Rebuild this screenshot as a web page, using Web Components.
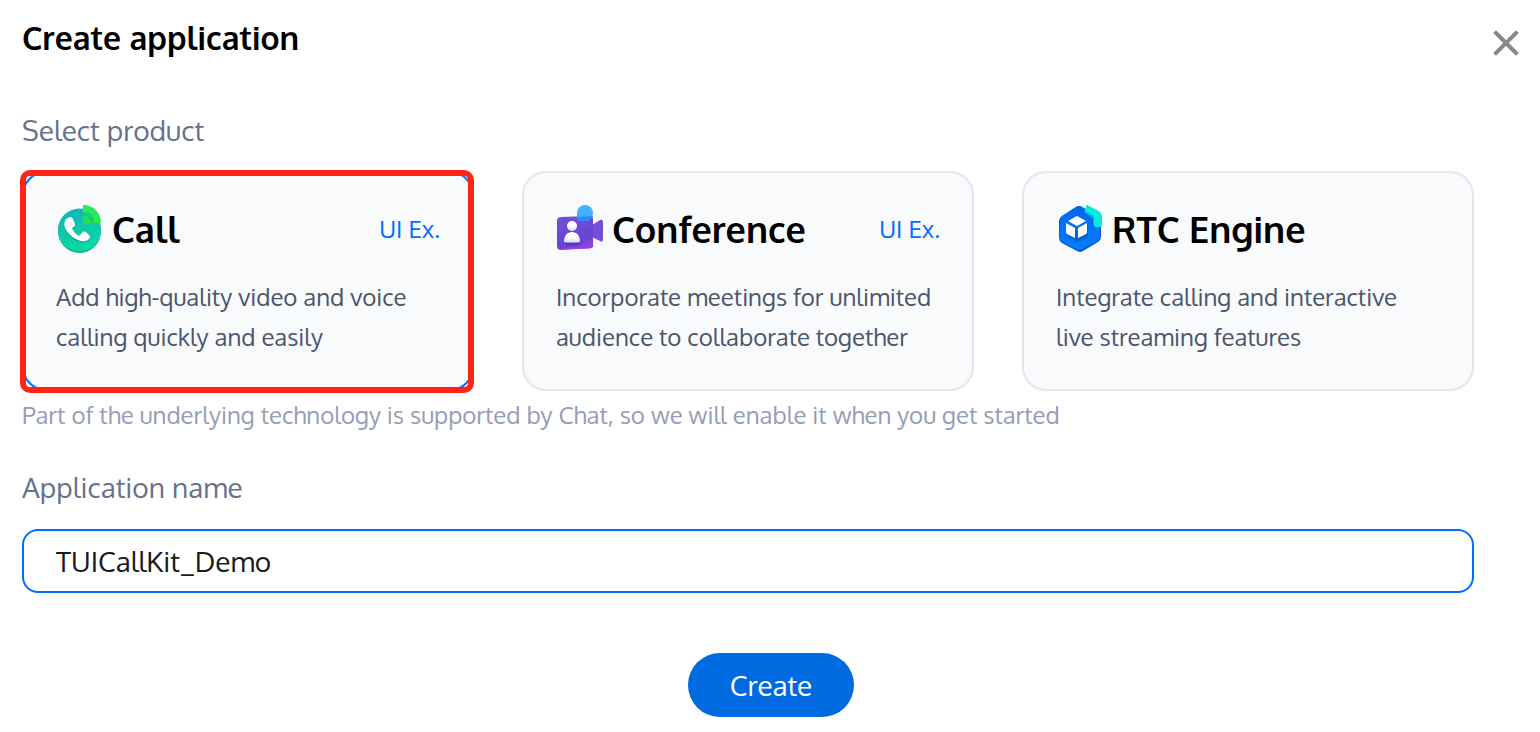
<!DOCTYPE html>
<html lang="en">
<head>
<meta charset="UTF-8">
<meta name="viewport" content="width=device-width, initial-scale=1">
<title>Create application</title>
<style>
    body {
        margin: 0;
        background: #fff;
        color: #000;
        font-family: Oxygen, "Noto Sans", "Open Sans", sans-serif;
    }
</style>
</head>
<body>
<create-dialog heading="Create application">
    <product-picker label="Select product" hint="Part of the underlying technology is supported by Chat, so we will enable it when you get started">
        <product-card name="Call" badge="UI Ex." selected>
            <svg slot="icon" viewBox="0 0 48 48" width="48" height="48" aria-hidden="true">
                <defs>
                    <linearGradient id="call-disc" x1="0.3" y1="0" x2="0.6" y2="1">
                        <stop offset="0" stop-color="#12b5b5"/>
                        <stop offset="1" stop-color="#08dda0"/>
                    </linearGradient>
                </defs>
                <ellipse cx="23.5" cy="26" rx="21.5" ry="22" fill="#0aa69a"/>
                <ellipse cx="23.5" cy="25" rx="21.5" ry="21.5" fill="url(#call-disc)"/>
                <path d="M27 0C38 0 45 8 45 18H38C38 11 34 7 27 7Z" fill="#28eb58"/>
                <path d="M27 7C34 7 38 11 38 18H34C34 14 31 11 27 11Z" fill="#18cf72"/>
                <path d="M27 11C31 11 35 14 35 18L29 20L27 17Z" fill="#24e34f"/>
                <path d="M11 16L16 14Q18 14 19 17L20 20Q20 22 17 24Q20 30 25 32L28 28Q31 26 34 30Q36 33 32 36Q25 40 17 34C9 28 7 19 11 16Z" fill="#078c86" opacity=".45"/>
                <path d="M10 14L14 12Q16 12 17 14L19 19Q20 21 16 23Q18 28 23 31L27 27Q28 26 30 27L33 30Q35 32 33 34Q30 37 25 36C14 33 6 22 9 16Z" fill="#fff"/>
            </svg>
            Add high-quality video and voice calling quickly and easily
        </product-card>
        <product-card name="Conference" badge="UI Ex.">
            <svg slot="icon" viewBox="0 0 48 48" width="48" height="48" aria-hidden="true">
                <defs>
                    <linearGradient id="conf-body" x1="0" y1="0" x2="0.4" y2="1">
                        <stop offset="0" stop-color="#7054d8"/>
                        <stop offset="0.85" stop-color="#6543d3"/>
                        <stop offset="1" stop-color="#8c43dd"/>
                    </linearGradient>
                    <linearGradient id="conf-person" x1="0" y1="0" x2="0" y2="1">
                        <stop offset="0.5" stop-color="#fff"/>
                        <stop offset="1" stop-color="#d5dcf2"/>
                    </linearGradient>
                </defs>
                <path d="M33 22L44 15Q47 14 47 17V34Q47 38 44 36L34 31Z" fill="#714fdb"/>
                <path d="M5 12L34 11Q37 11 37 14V40Q37 43 34 43L5 45Q1 45 1 41V16Q1 12 5 12Z" fill="url(#conf-body)"/>
                <path d="M2 42Q3 44 6 44L34 43Q37 43 37 40" fill="none" stroke="#9446e0" stroke-width="1"/>
                <path d="M10 38H25L23 41H10Z" fill="#4a2eb0" opacity=".4"/>
                <circle cx="16" cy="21" r="5" fill="url(#conf-person)"/>
                <path d="M8 37C8 31 11 27 16 27S24 31 24 37Q16 38 8 37Z" fill="url(#conf-person)"/>
                <path d="M21 16V8A8 8 0 1 1 29 16Z" fill="#42b2ff"/>
                <path d="M21 12L37 11Q35 16 29 16H21Z" fill="#3187f5"/>
            </svg>
            Incorporate meetings for unlimited audience to collaborate together
        </product-card>
        <product-card name="RTC Engine">
            <svg slot="icon" viewBox="0 0 48 48" width="48" height="48" aria-hidden="true">
                <defs>
                    <linearGradient id="rtc-hex" x1="0" y1="0" x2="0" y2="1">
                        <stop offset="0" stop-color="#0468e8"/>
                        <stop offset="1" stop-color="#087cff"/>
                    </linearGradient>
                </defs>
                <path d="M20 2Q23 0 26 2L42 11Q45 13 45 16V32Q45 35 42 37L27 46Q24 48 21 46L6 38Q3 36 3 33V16Q3 13 6 11Z" fill="#0859cf"/>
                <path d="M20 2Q23 0 26 2L41 11Q44 13 44 16V31Q44 34 41 36L26 44Q23 46 20 44L6 36Q4 35 4 32V16Q4 13 6 11Z" fill="url(#rtc-hex)"/>
                <path d="M12 19L22 26L32 18V32L22 37L12 33Z" fill="#0650b9" opacity=".5"/>
                <path d="M21 11L30 16L21 21L12 16Z" fill="#fff"/>
                <path d="M10 18L19 23V33L11 29Q10 28 10 27ZM31 18V27Q31 28 30 29L22 33V23Z" fill="#fff"/>
                <path d="M31 0L43 6Q46 8 46 11V20Q46 22 44 22H40Q38 22 38 20V13L30 8Q28 7 29 5L30 1Z" fill="#08eadf"/>
                <path d="M29 6L38 11V20Q37 20 37 14Z" fill="#0aaee8"/>
            </svg>
            Integrate calling and interactive live streaming features
        </product-card>
    </product-picker>
    <text-field label="Application name" value="TUICallKit_Demo"></text-field>
    <primary-button slot="action">Create</primary-button>
</create-dialog>

<script>
class CreateDialog extends HTMLElement {
    constructor() {
        super();
        this.attachShadow({ mode: 'open' });
        this.render();
    }

    render() {
        this.shadowRoot.innerHTML = `
        <style>
        :host {
            display: block;
            padding: 14px 20px 15px 22px;
        }
        header {
            display: flex;
            justify-content: space-between;
            align-items: center;
        }
        h1 {
            margin: 0;
            font-size: 32px;
            line-height: 48px;
            font-weight: 700;
        }
        .close {
            display: flex;
            padding: 10px 0 0;
            border: 0;
            background: none;
            cursor: pointer;
        }
        .body {
            display: flex;
            flex-direction: column;
            gap: 28px;
            padding: 48px 46px 0 0;
        }
        footer {
            display: flex;
            justify-content: center;
            padding-top: 60px;
        }
        </style>
        <section role="dialog" aria-labelledby="heading">
            <header>
                <h1 id="heading"></h1>
                <button class="close" type="button" aria-label="Close">
                    <svg viewBox="0 0 28 28" width="28" height="28" aria-hidden="true">
                        <path d="M4 4L24 24M24 4L4 24" stroke="#888" stroke-width="4" stroke-linecap="square" fill="none"/>
                    </svg>
                </button>
            </header>
            <div class="body"><slot></slot></div>
            <footer><slot name="action"></slot></footer>
        </section>
        `;
        this.shadowRoot.querySelector('h1').textContent = this.getAttribute('heading');
    }
}

class ProductPicker extends HTMLElement {
    constructor() {
        super();
        this.attachShadow({ mode: 'open' });
        this.render();
        this.addEventListener('product-select', (e) => this.select(e.target));
    }

    render() {
        this.shadowRoot.innerHTML = `
        <style>
        :host {
            display: block;
        }
        h2 {
            margin: 0 0 21px;
            font-size: 28px;
            line-height: 40px;
            font-weight: 400;
            color: #67728c;
        }
        .cards {
            display: grid;
            grid-template-columns: repeat(3, minmax(0, 1fr));
            gap: 48px;
        }
        .hint {
            margin: 0;
            font-size: 24px;
            line-height: 48px;
            color: #949eb5;
        }
        </style>
        <h2 id="label"></h2>
        <div class="cards" role="group" aria-labelledby="label"><slot></slot></div>
        <p class="hint"></p>
        `;
        this.shadowRoot.querySelector('h2').textContent = this.getAttribute('label');
        this.shadowRoot.querySelector('.hint').textContent = this.getAttribute('hint');
    }

    select(card) {
        this.querySelectorAll('product-card').forEach((item) => {
            item.selected = item === card;
        });
    }
}

class ProductCard extends HTMLElement {
    constructor() {
        super();
        this.attachShadow({ mode: 'open' });
        this.render();
    }

    render() {
        this.shadowRoot.innerHTML = `
        <style>
        :host {
            display: block;
            position: relative;
        }
        button {
            display: flex;
            flex-direction: column;
            gap: 24px;
            box-sizing: border-box;
            width: 100%;
            height: 100%;
            padding: 32px;
            border: 2px solid #e2e6ee;
            border-radius: 24px;
            background: #f9fafc;
            font: inherit;
            text-align: left;
            cursor: pointer;
        }
        :host([selected]) button {
            border-color: #006eff;
        }
        /* Highlight frame drawn over the selected card */
        :host([selected])::after {
            content: "";
            position: absolute;
            inset: -1px 0 -2px -2px;
            border: 6px solid #ff2414;
            border-radius: 10px;
            pointer-events: none;
        }
        .top {
            display: flex;
            align-items: center;
            align-self: stretch;
            gap: 8px;
            height: 48px;
        }
        .name {
            flex: 1;
            font-size: 36px;
            line-height: 48px;
            font-weight: 700;
            color: #000;
            white-space: nowrap;
        }
        .badge {
            font-size: 24px;
            line-height: 48px;
            color: #006eff;
        }
        .text {
            font-size: 24px;
            line-height: 40px;
            color: #4b566c;
        }
        </style>
        <button type="button">
            <span class="top">
                <slot name="icon"></slot>
                <span class="name"></span>
                <span class="badge"></span>
            </span>
            <span class="text"><slot></slot></span>
        </button>
        `;
        this.shadowRoot.querySelector('.name').textContent = this.getAttribute('name');
        this.shadowRoot.querySelector('.badge').textContent = this.getAttribute('badge');
        const button = this.shadowRoot.querySelector('button');
        button.setAttribute('aria-pressed', this.selected);
        button.addEventListener('click', () => {
            this.dispatchEvent(new CustomEvent('product-select', { bubbles: true }));
        });
    }

    set selected(value) {
        this.toggleAttribute('selected', value);
        this.shadowRoot.querySelector('button').setAttribute('aria-pressed', value);
    }

    get selected() {
        return this.hasAttribute('selected');
    }
}

class TextField extends HTMLElement {
    constructor() {
        super();
        this.attachShadow({ mode: 'open' });
        this.render();
    }

    render() {
        this.shadowRoot.innerHTML = `
        <style>
        :host {
            display: flex;
            flex-direction: column;
            gap: 22px;
        }
        label {
            font-size: 28px;
            line-height: 40px;
            color: #67728c;
        }
        input {
            box-sizing: border-box;
            width: 100%;
            height: 64px;
            padding: 0 32px;
            border: 2px solid #006eff;
            border-radius: 16px;
            outline: none;
            background: #fff;
            color: #1a1a1a;
            font-family: inherit;
            font-size: 28px;
        }
        </style>
        <label for="field"></label>
        <input id="field" type="text">
        `;
        this.shadowRoot.querySelector('label').textContent = this.getAttribute('label');
        this.shadowRoot.querySelector('input').value = this.getAttribute('value');
    }

    get value() {
        return this.shadowRoot.querySelector('input').value;
    }
}

class PrimaryButton extends HTMLElement {
    constructor() {
        super();
        this.attachShadow({ mode: 'open' });
        this.render();
    }

    render() {
        this.shadowRoot.innerHTML = `
        <style>
        :host {
            display: block;
        }
        button {
            min-width: 166px;
            height: 64px;
            padding: 0 40px;
            border: 0;
            border-radius: 32px;
            background: #006ae0;
            color: #fff;
            font-family: inherit;
            font-size: 28px;
            cursor: pointer;
        }
        button:hover {
            background: #005cc4;
        }
        </style>
        <button type="button"><slot></slot></button>
        `;
    }
}

// Register the custom elements
customElements.define('create-dialog', CreateDialog);
customElements.define('product-picker', ProductPicker);
customElements.define('product-card', ProductCard);
customElements.define('text-field', TextField);
customElements.define('primary-button', PrimaryButton);
</script>
</body>
</html>
